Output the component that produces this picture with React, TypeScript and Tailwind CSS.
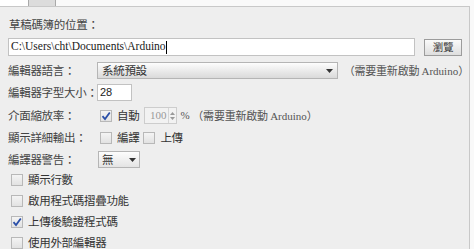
import type { ReactNode } from 'react'

const cjk = "font-['Noto_Sans_CJK_TC','Noto_Sans',sans-serif]"

function Check({ checked = false }: { checked?: boolean }) {
  return (
    <span className="w-[12px] h-[12px] border border-[#b8b8b8] bg-gradient-to-b from-[#f4f4f4] to-[#e2e2e2] flex items-center justify-center shrink-0">
      {checked && (
        <svg width="10" height="10" viewBox="0 0 10 10">
          <path d="M1.5 5.2 L4 8 L8.8 1.5" fill="none" stroke="#2a4fa8" strokeWidth="1.8" />
        </svg>
      )}
    </span>
  )
}

function Arrow() {
  return (
    <svg width="7" height="4" viewBox="0 0 7 4">
      <path d="M0 0 H7 L3.5 4 Z" fill="#333" />
    </svg>
  )
}

function Row({ label, children, className = '' }: { label: string; children: ReactNode; className?: string }) {
  return (
    <div className={`flex items-center whitespace-nowrap ${className}`}>
      <span className="w-[89px] shrink-0">{label}</span>
      {children}
    </div>
  )
}

function Restart({ className = '' }: { className?: string }) {
  return (
    <span className={`text-[#555] whitespace-nowrap text-[11px] tracking-[-0.2px] ${className}`}>
      （需要重新啟動 <span className="font-['Liberation_Serif',serif] tracking-normal">Arduino</span>）
    </span>
  )
}

export default function App() {
  return (
    <div className={`w-[474px] h-[249px] overflow-hidden bg-[#f9f9f9] text-[11.5px] tracking-[-0.3px] leading-none text-[#444] ${cjk}`}>
      {/* tabs, cut off at the top */}
      <div className="flex h-[6px] items-end">
        <div className="w-[28px] h-[6px] bg-white" />
        <div className="w-[28px] h-[6px] bg-[#dcdcdc] border-x border-[#a9a9a9]" />
      </div>
      <div className="w-[470px] h-[243px] bg-[#eeeeee] border-t border-r border-[#c8c8c8] pl-[8px] pt-[9px]">
        <div className="pl-[1px] h-[18px] flex items-center">草稿碼簿的位置：</div>
        <div className="flex items-center mt-[4px]">
          <div className="w-[407px] h-[18px] bg-white border border-[#c2c2c2] flex items-center pl-[2px] font-['Liberation_Serif',serif] text-[11.5px] tracking-normal text-[#1a1a1a]">
            C:\Users\cht\Documents\Arduino<span className="w-px h-[13px] bg-black" />
          </div>
          <div className="ml-[9px] w-[38px] h-[17px] border border-[#9c9c9c] bg-gradient-to-b from-[#fafafa] to-[#dedede] flex items-center justify-center text-[10.5px] text-[#333]">
            瀏覽
          </div>
        </div>

        <Row label="編輯器語言：" className="mt-[6px] h-[17px]">
          <div className="w-[241px] h-[17px] border border-[#b5b5b5] bg-gradient-to-b from-[#fdfdfd] to-[#dadada] flex items-center justify-between px-[4px] text-[#333]">
            <span>系統預設</span>
            <Arrow />
          </div>
          <Restart className="ml-[6px]" />
        </Row>

        <Row label="編輯器字型大小：" className="mt-[5px] h-[17px]">
          <div className="w-[35px] h-[17px] bg-white border border-[#c2c2c2] flex items-center pl-[2px] text-[#222] font-['Liberation_Sans',sans-serif] text-[11px] tracking-normal">
            28
          </div>
        </Row>

        <Row label="介面縮放率：" className="mt-[6px] h-[17px]">
          <span className="ml-[3px]"><Check checked /></span>
          <span className="ml-[5px] text-[#333]">自動</span>
          <div className="ml-[5px] w-[33px] h-[17px] border border-[#cdcdcd] bg-[#f2f2f2] flex items-center justify-end">
            <span className="text-[#999] font-['Liberation_Serif',serif] text-[11px] tracking-normal mr-[2px]">100</span>
            <span className="w-[8px] h-full flex flex-col items-center justify-center gap-[2px] border-l border-[#d6d6d6]">
              <svg width="5" height="3" viewBox="0 0 5 3"><path d="M0 3 L2.5 0 L5 3Z" fill="#999" /></svg>
              <svg width="5" height="3" viewBox="0 0 5 3"><path d="M0 0 H5 L2.5 3Z" fill="#999" /></svg>
            </span>
          </div>
          <span className="ml-[3px] text-[#555] font-['Liberation_Serif',serif] text-[11px]">%</span>
          <Restart className="ml-[3px]" />
        </Row>

        <Row label="顯示詳細輸出：" className="mt-[5px] h-[17px]">
          <span className="ml-[3px]"><Check /></span>
          <span className="ml-[5px] text-[#333]">編譯</span>
          <span className="ml-[4px]"><Check /></span>
          <span className="ml-[5px] text-[#333]">上傳</span>
        </Row>

        <Row label="編譯器警告：" className="mt-[5px] h-[17px]">
          <div className="ml-[1px] w-[42px] h-[17px] border border-[#b5b5b5] bg-gradient-to-b from-[#fdfdfd] to-[#e4e4e4] flex items-center justify-between px-[3px] text-[#333]">
            <span>無</span>
            <Arrow />
          </div>
        </Row>

        <div className="flex flex-col gap-[9px] mt-[6px] pl-[3px]">
          {[
            ['顯示行數', false],
            ['啟用程式碼摺疊功能', false],
            ['上傳後驗證程式碼', true],
            ['使用外部編輯器', false],
          ].map(([t, c]) => (
            <div key={t as string} className="flex items-center h-[12px]">
              <Check checked={c as boolean} />
              <span className="ml-[5px] text-[#333]">{t as string}</span>
            </div>
          ))}
        </div>
      </div>
    </div>
  )
}
